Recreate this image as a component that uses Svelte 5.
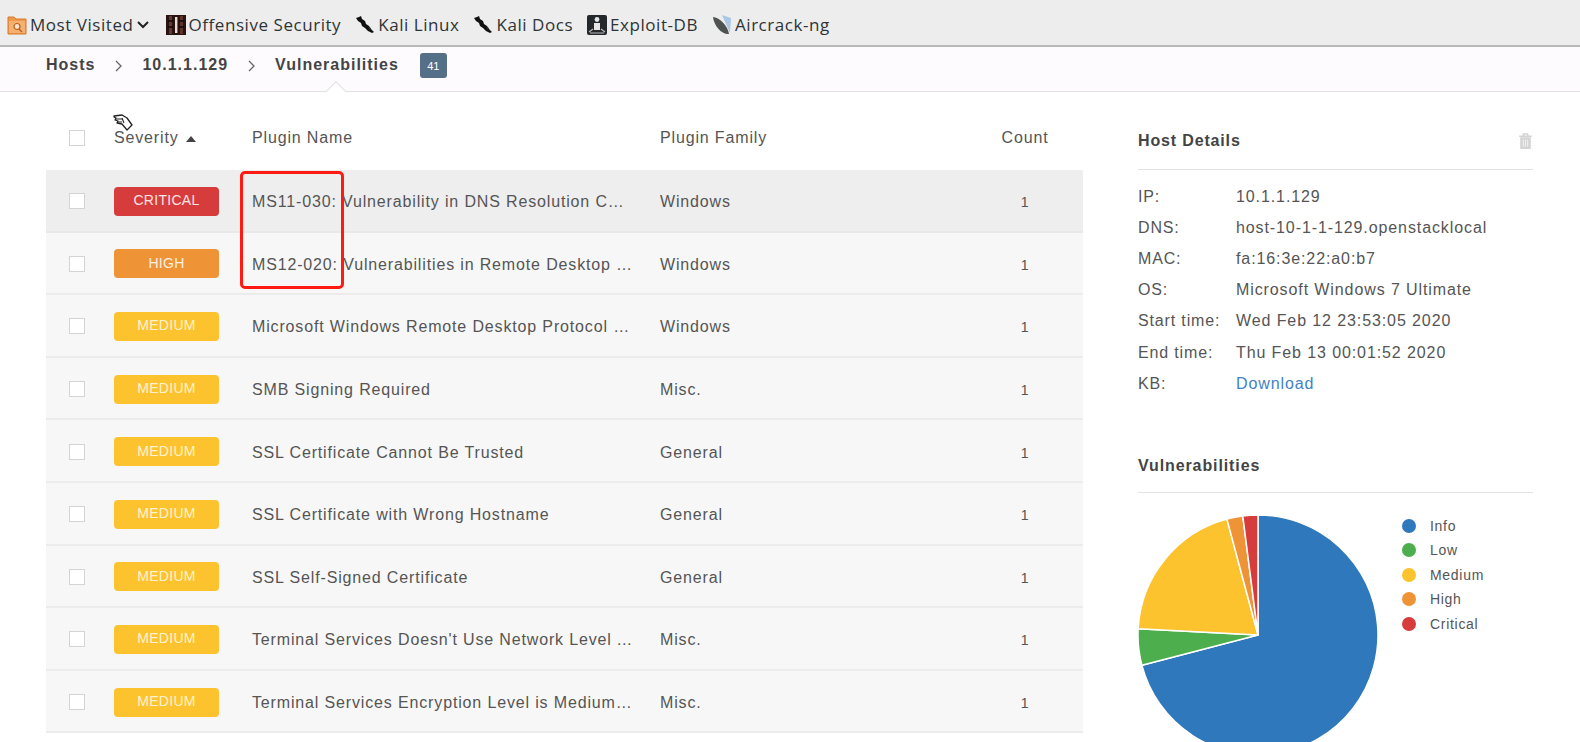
<script>
  const bookmarks = [
    { label: 'Most Visited', icon: 'folder', chevron: true },
    { label: 'Offensive Security', icon: 'offsec' },
    { label: 'Kali Linux', icon: 'kali' },
    { label: 'Kali Docs', icon: 'kali' },
    { label: 'Exploit-DB', icon: 'edb' },
    { label: 'Aircrack-ng', icon: 'air' }
  ];
  const rows = [
    ['critical', 'CRITICAL', 'MS11-030: Vulnerability in DNS Resolution Could Allow Remote Code Execution', 'Windows'],
    ['high', 'HIGH', 'MS12-020: Vulnerabilities in Remote Desktop Could Allow Remote Code Execution', 'Windows'],
    ['medium', 'MEDIUM', 'Microsoft Windows Remote Desktop Protocol Server Man-in-the-Middle', 'Windows'],
    ['medium', 'MEDIUM', 'SMB Signing Required', 'Misc.'],
    ['medium', 'MEDIUM', 'SSL Certificate Cannot Be Trusted', 'General'],
    ['medium', 'MEDIUM', 'SSL Certificate with Wrong Hostname', 'General'],
    ['medium', 'MEDIUM', 'SSL Self-Signed Certificate', 'General'],
    ['medium', 'MEDIUM', "Terminal Services Doesn't Use Network Level Authentication", 'Misc.'],
    ['medium', 'MEDIUM', 'Terminal Services Encryption Level is Medium or Low', 'Misc.']
  ];
  const details = [
    ['IP:', '10.1.1.129'],
    ['DNS:', 'host-10-1-1-129.openstacklocal'],
    ['MAC:', 'fa:16:3e:22:a0:b7'],
    ['OS:', 'Microsoft Windows 7 Ultimate'],
    ['Start time:', 'Wed Feb 12 23:53:05 2020'],
    ['End time:', 'Thu Feb 13 00:01:52 2020']
  ];
  const legend = [
    ['Info', '#2f78bb'],
    ['Low', '#4cae4c'],
    ['Medium', '#fdc32e'],
    ['High', '#ee9336'],
    ['Critical', '#d73c3c']
  ];
  const slices = [
    [0, 255.4, '#2f78bb'],
    [255.4, 273, '#4cae4c'],
    [273, 345, '#fdc32e'],
    [345, 352.7, '#ee9336'],
    [352.7, 360, '#d73c3c']
  ];
  function slice(a, b) {
    const r = 120, c = 120;
    const pt = (d) => {
      const t = (d * Math.PI) / 180;
      return `${(c + r * Math.sin(t)).toFixed(2)} ${(c - r * Math.cos(t)).toFixed(2)}`;
    };
    return `M${c} ${c}L${pt(a)}A${r} ${r} 0 ${b - a > 180 ? 1 : 0} 1 ${pt(b)}Z`;
  }
</script>

<div class="page">
  <nav class="toolbar">
    {#each bookmarks as b}
      <span class="bm">
        <svg class="bicon" viewBox="0 0 20 20" aria-hidden="true">
          {#if b.icon === 'folder'}
            <path d="M1 2h6l2 2h10v15H1z" fill="#ee9a4d" stroke="#d9782a" />
            <rect x="2" y="6" width="16" height="12" fill="#f6b070" />
            <circle cx="10" cy="11.5" r="3" fill="#fbe3cc" stroke="#b9601c" stroke-width="1.2" />
            <path d="M12 14l3 3" stroke="#b9601c" stroke-width="1.4" />
          {:else if b.icon === 'offsec'}
            <rect width="20" height="20" fill="#2a1210" />
            <rect x="3" y="1" width="3" height="18" fill="#5f3a36" />
            <rect x="14" y="1" width="3" height="18" fill="#5f332c" />
            <rect x="9" y="2" width="2.4" height="16" fill="#e9dcd6" />
            <path d="M2 6h5M2 12h5M13 6h5M13 12h5" stroke="#120806" stroke-width="1.4" />
          {:else if b.icon === 'kali'}
            <path d="M1 3l3-1 2-1 1 3 3 2 1 3 3 2 2 3 3 3-2 1-4-2-3-3-3-2-1-3-3-2z" fill="#111" />
            <path d="M13 12l3 1-1 2z" fill="#333" />
          {:else if b.icon === 'edb'}
            <rect width="20" height="20" rx="2" fill="#24282a" />
            <circle cx="10" cy="4.5" r="2.4" fill="#e6e6e6" />
            <path d="M7 8h6v7H7z" fill="#e6e6e6" />
            <path d="M2 17l4-3M18 17l-4-3M3 18h14" stroke="#bbb" stroke-width="1.2" />
          {:else}
            <path d="M10 0l9 3-1 15z" fill="#a9c8e6" />
            <path d="M1 2c6 0 15 9 16 17-7 1-15-8-16-17z" fill="#4d5350" />
          {/if}
        </svg>
        <span>{b.label}</span>
        {#if b.chevron}
          <svg class="chev" viewBox="0 0 12 8" aria-hidden="true"><path d="M1 1l5 5 5-5" fill="none" stroke="#222" stroke-width="2" /></svg>
        {/if}
      </span>
    {/each}
  </nav>

  <header class="crumbs">
    <b>Hosts</b>
    <svg class="sep" viewBox="0 0 8 12" aria-hidden="true"><path d="M1 1l5 5-5 5" fill="none" stroke="#666" stroke-width="1.3" /></svg>
    <b>10.1.1.129</b>
    <svg class="sep" viewBox="0 0 8 12" aria-hidden="true"><path d="M1 1l5 5-5 5" fill="none" stroke="#666" stroke-width="1.3" /></svg>
    <b>Vulnerabilities</b>
    <span class="count-badge">41</span>
    <span class="notch"></span>
  </header>

  <main class="content">
    <section class="table">
      <div class="row head">
        <span class="cb"></span>
        <span class="sev">Severity <i class="caret"></i></span>
        <span class="name">Plugin Name</span>
        <span class="fam">Plugin Family</span>
        <span class="cnt">Count</span>
      </div>
      {#each rows as r, i}
        <div class="row body" class:first={i === 0}>
          <span class="cb"></span>
          <span class="sev"><span class="badge {r[0]}">{r[1]}</span></span>
          <span class="name"><span class="trunc">{r[2]}</span></span>
          <span class="fam">{r[3]}</span>
          <span class="cnt one">1</span>
        </div>
      {/each}
      <svg class="cursor" viewBox="0 0 20 20" aria-hidden="true">
        <path d="M1 2l8-1 5 3 5 7-5 5-5-6-5-1 1-2-3-1 1-2-2-1z" fill="#fff" stroke="#222" stroke-width="1.3" stroke-linejoin="round" />
        <path d="M3 5h6M4 8h5M9 4l2 5" stroke="#222" stroke-width="1.1" fill="none" />
      </svg>
      <div class="mark"></div>
    </section>

    <aside class="side">
      <h3 class="sub host">Host Details
        <svg class="trash" viewBox="0 0 14 16" aria-hidden="true">
          <path d="M1 3h12M5 3V1h4v2" stroke="#d4d4d4" stroke-width="1.5" fill="none" />
          <path d="M2 4h10v11H2z" fill="#d4d4d4" />
          <path d="M5 6v7M7 6v7M9 6v7" stroke="#efefef" stroke-width="1" />
        </svg>
      </h3>
      <dl class="details">
        {#each details as d}
          <dt>{d[0]}</dt><dd>{d[1]}</dd>
        {/each}
        <dt>KB:</dt><dd class="link">Download</dd>
      </dl>
      <h3 class="sub vuln">Vulnerabilities</h3>
      <div class="chart">
        <svg class="pie" viewBox="0 0 240 240" aria-hidden="true">
          {#each slices as s}
            <path d={slice(s[0], s[1])} fill={s[2]} stroke="#fff" stroke-width="1.5" />
          {/each}
        </svg>
        <ul class="legend">
          {#each legend as l}
            <li><i style="background:{l[1]}"></i>{l[0]}</li>
          {/each}
        </ul>
      </div>
    </aside>
  </main>
</div>

<style>
  :global(body) { margin: 0; background: #fff; overflow: hidden; }
  .page { width: 1580px; height: 742px; overflow: hidden; font-family: "Liberation Sans", Arial, sans-serif; color: #555; position: relative; }

  .toolbar { background: #ededed; border-bottom: 2px solid #b8b8b8; display: flex; align-items: center; padding: 4px 0 0 7px; box-sizing: content-box; height: 41px; gap: 14px; font-family: "Open Sans", sans-serif; font-size: 17px; letter-spacing: .55px; color: #2e3436; }
  .bm { display: inline-flex; align-items: center; gap: 3px; }
  .bicon { width: 20px; height: 20px; flex: none; }
  .chev { width: 12px; height: 8px; margin: 0 3px 0 0; }

  .crumbs { height: 45px; background: #fefbfe; border-bottom: 1px solid #e2e2e2; display: flex; align-items: center; padding: 0 0 9px 46px; position: relative; font-size: 16px; letter-spacing: 1px; color: #444; box-sizing: border-box; }
  .crumbs b { font-weight: 700; }
  .sep { width: 8px; height: 12px; margin: 2px 19px 0 20px; }
  .count-badge { margin: 2px 0 0 21px; width: 27px; height: 25px; border-radius: 3px; background: #566f88; color: #fff; font-size: 11px; display: flex; align-items: center; justify-content: center; letter-spacing: 0; }
  .notch { position: absolute; left: 329px; top: 37px; width: 13px; height: 13px; background: #fff; border-left: 1px solid #e2e2e2; border-top: 1px solid #e2e2e2; transform: rotate(45deg); }

  .content { display: flex; padding-left: 46px; }
  .table { width: 1037px; position: relative; padding-top: 14px; }
  .row { display: flex; align-items: center; height: 62.6px; box-sizing: border-box; background: #f7f7f7; border-bottom: 2px solid #ececec; font-size: 16px; letter-spacing: .85px; color: #555; }
  .row.body { padding-top: 2px; }
  .row.body .name, .row.body .fam, .row.body .one { padding-top: 2px; }
  .row.first { background: #eee; border-bottom-color: #e8e8e8; }
  .row.head { background: #fff; height: 64px; border: 0; padding-bottom: 1px; }
  .cb { width: 16px; height: 16px; margin-left: 23px; background: #fff; border: 1px solid #d4d4d4; box-sizing: border-box; flex: none; margin-right: 29px; }
  .sev { width: 138px; flex: none; }
  .badge { display: flex; width: 105px; height: 29px; border-radius: 4px; color: #fff; font-size: 14px; letter-spacing: .3px; align-items: center; justify-content: center; padding-bottom: 2px; box-sizing: border-box; }
  .badge.critical { background: #d73c3c; color: #fbe4e4; }
  .badge.high { background: #ee9336; color: #fdf0e0; }
  .badge.medium { background: #fdc32e; color: #fff3d0; }
  .name { width: 408px; flex: none; }
  .trunc { display: block; width: 381px; overflow: hidden; white-space: nowrap; text-overflow: ellipsis; }
  .fam { width: 300px; flex: none; }
  .cnt { width: 90px; text-align: center; margin-left: 20px; }
  .cnt.one { font-size: 14px; }
  .caret { display: inline-block; width: 0; height: 0; border-left: 5px solid transparent; border-right: 5px solid transparent; border-bottom: 6px solid #444; margin-left: 2px; vertical-align: 1px; }
  .cursor { position: absolute; left: 67px; top: 22px; width: 20px; height: 20px; }
  .mark { position: absolute; left: 194px; top: 79px; width: 104px; height: 118px; box-sizing: border-box; border: 3px solid #ff1a12; border-radius: 5px; }

  .side { margin-left: 55px; width: 395px; padding-top: 39px; font-size: 16px; letter-spacing: .95px; }
  .sub { margin: 0; font-size: 16px; font-weight: 700; color: #444; height: 38px; border-bottom: 1px solid #e2e2e2; position: relative; line-height: 20px; }
  .host { letter-spacing: .85px; }
  .trash { position: absolute; right: 0; top: 2px; width: 15px; height: 17px; }
  .details { margin: 11px 0 0; display: grid; grid-template-columns: 98px 1fr; grid-auto-rows: 31.2px; align-items: center; letter-spacing: .9px; }
  dt, dd { margin: 0; }
  dt { letter-spacing: .85px; }
  .link { color: #3f82c4; }
  .vuln { margin-top: 57px; height: 36px; letter-spacing: .9px; }
  .chart { position: relative; height: 260px; }
  .pie { position: absolute; left: 0; top: 22px; width: 240px; height: 240px; }
  .legend { position: absolute; left: 264px; top: 20px; margin: 0; padding: 0; list-style: none; font-size: 14px; letter-spacing: .7px; }
  .legend li { display: flex; align-items: center; height: 24.5px; color: #555; }
  .legend i { width: 14px; height: 14px; border-radius: 50%; margin-right: 14px; }
</style>
